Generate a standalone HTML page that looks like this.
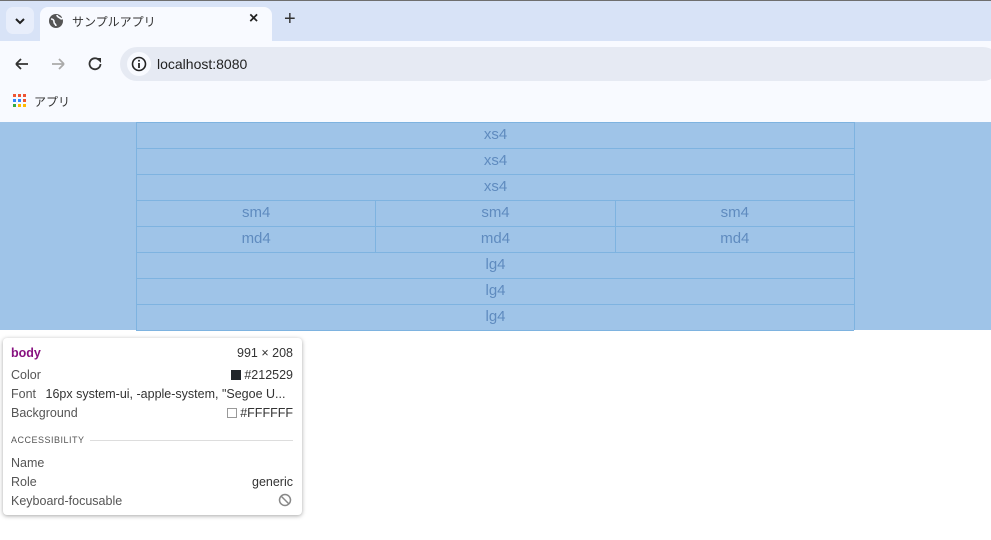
<!DOCTYPE html>
<html><head><meta charset="utf-8"><style>
*{box-sizing:border-box;margin:0;padding:0}
body{width:991px;height:540px;overflow:hidden;background:#fff;font-family:"Liberation Sans","Noto Sans CJK JP",sans-serif;position:relative}
.abs{position:absolute}
.top{left:0;top:0;width:991px;height:41px;background:#d8e3f7;border-top:1px solid #6f6f6f}
.tab{left:40px;top:7px;width:232px;height:34px;background:#f8faff;border-radius:8px 8px 0 0}
.tbtn{left:6px;top:7px;width:28px;height:27px;background:#e8eefb;border-radius:7px}
.bar{left:0;top:41px;width:991px;height:81px;background:#f8faff}
.url{left:120px;top:47px;width:880px;height:34px;background:#e6eaf3;border-radius:17px}
.grid{left:0;top:122px;width:991px;height:208px;background:#9fc4e8}
.row{position:absolute;left:136px;width:719px;height:26px;display:flex;border-right:1px solid #7eb3e0}
.cell{flex:1;border:1px solid #7eb3e0;border-right:none;margin-bottom:-1px;text-align:center;line-height:24px;font-size:15px;color:#5f8bbf}
.tip{left:3px;top:338px;width:299px;height:177px;background:#fff;border-radius:4px;box-shadow:0 1px 4px rgba(0,0,0,.35);font-size:12.5px;color:#555}
.tip .l{position:absolute;left:8px}
.tip .r{position:absolute;right:9px}
</style></head><body>
<div class="abs top"></div>
<div class="abs tbtn"><svg width="28" height="27"><path d="M10 12l4 4 4-4" fill="none" stroke="#222" stroke-width="2"/></svg></div>
<div class="abs tab"></div>
<svg class="abs" style="left:48px;top:13px" width="16" height="16"><circle cx="8" cy="8" r="7" fill="#555"/><path d="M3 6c2 0 3 1 3 3s2 2 2 4M9 2c0 2 2 2 3 3s2 1 3 0" stroke="#f8faff" stroke-width="1.6" fill="none"/></svg>
<div class="abs" style="left:72px;top:13px;font-size:12px;color:#333">サンプルアプリ</div>
<div class="abs" style="left:249px;top:10px;font-size:16px;color:#222;font-weight:bold">×</div>
<div class="abs" style="left:284px;top:8px;font-size:20px;color:#333">+</div>
<div class="abs bar"></div>
<div class="abs url"></div>
<svg class="abs" style="left:12px;top:54px" width="100" height="20"><path d="M4 10h12M4 10l5-5M4 10l5 5" stroke="#333" stroke-width="1.8" fill="none"/><path d="M40 10h12M52 10l-5-5M52 10l-5 5" stroke="#aaa" stroke-width="1.8" fill="none"/><path d="M87 6a5.5 5.5 0 1 0 1.5 4" stroke="#333" stroke-width="1.8" fill="none"/><path d="M84 4h5v5z" fill="#333"/></svg>
<div class="abs" style="left:127px;top:52px;width:24px;height:24px;border-radius:12px;background:#f8faff"></div>
<svg class="abs" style="left:131px;top:56px" width="16" height="16"><circle cx="8" cy="8" r="6.5" stroke="#222" stroke-width="1.6" fill="none"/><path d="M8 7v5" stroke="#222" stroke-width="1.8"/><circle cx="8" cy="4.8" r="1" fill="#222"/></svg>
<div class="abs" style="left:157px;top:56px;font-size:14px;color:#222">localhost:8080</div>
<svg class="abs" style="left:13px;top:94px" width="13" height="13"><rect x="0" y="0" width="3" height="3" fill="#e53"/><rect x="5" y="0" width="3" height="3" fill="#e53"/><rect x="10" y="0" width="3" height="3" fill="#e53"/><rect x="0" y="5" width="3" height="3" fill="#38f"/><rect x="5" y="5" width="3" height="3" fill="#38f"/><rect x="10" y="5" width="3" height="3" fill="#e53"/><rect x="0" y="10" width="3" height="3" fill="#3a4"/><rect x="5" y="10" width="3" height="3" fill="#fb0"/><rect x="10" y="10" width="3" height="3" fill="#fb0"/></svg>
<div class="abs" style="left:34px;top:93px;font-size:12px;color:#333">アプリ</div>
<div class="abs grid">
<div class="row" style="top:0"><div class="cell">xs4</div></div>
<div class="row" style="top:26px"><div class="cell">xs4</div></div>
<div class="row" style="top:52px"><div class="cell">xs4</div></div>
<div class="row" style="top:78px"><div class="cell">sm4</div><div class="cell">sm4</div><div class="cell">sm4</div></div>
<div class="row" style="top:104px"><div class="cell">md4</div><div class="cell">md4</div><div class="cell">md4</div></div>
<div class="row" style="top:130px"><div class="cell">lg4</div></div>
<div class="row" style="top:156px"><div class="cell">lg4</div></div>
<div class="row" style="top:182px"><div class="cell">lg4</div></div>
</div>
<div class="abs" style="left:14px;top:330px;width:0;height:0;border-left:8px solid transparent;border-right:8px solid transparent;border-bottom:8px solid #fff"></div>
<div class="abs tip">
<div class="l" style="top:8px;color:#881280;font-weight:bold">body</div><div class="r" style="top:8px;color:#333">991 × 208</div>
<div class="l" style="top:30px">Color</div><div class="r" style="top:30px;color:#333"><span style="display:inline-block;width:10px;height:10px;background:#212529;vertical-align:-1px"></span> #212529</div>
<div class="l" style="top:49px">Font <span style="color:#333;margin-left:6px">16px system-ui, -apple-system, "Segoe U...</span></div>
<div class="l" style="top:68px">Background</div><div class="r" style="top:68px;color:#333"><span style="display:inline-block;width:10px;height:10px;border:1px solid #999;vertical-align:-1px"></span> #FFFFFF</div>
<div class="l" style="top:97px;font-size:9px;letter-spacing:.5px">ACCESSIBILITY</div>
<div class="abs" style="left:87px;top:102px;width:203px;height:1px;background:#ddd"></div>
<div class="l" style="top:118px">Name</div>
<div class="l" style="top:137px">Role</div><div class="r" style="top:137px;color:#333">generic</div>
<div class="l" style="top:156px">Keyboard-focusable</div>
<svg class="abs" style="right:10px;top:155px" width="14" height="14"><circle cx="7" cy="7" r="5.5" stroke="#888" stroke-width="1.5" fill="none"/><path d="M3 3l8 8" stroke="#888" stroke-width="1.5"/></svg>
</div>
</body></html>
